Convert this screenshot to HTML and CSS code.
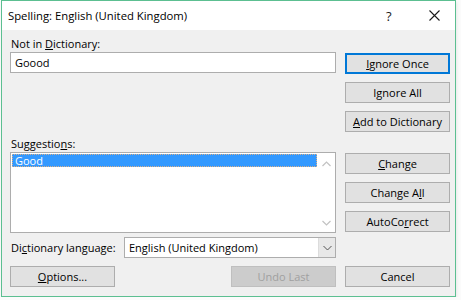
FILE: index.html
```html
<!DOCTYPE html>
<html>
<head>
<meta charset="utf-8">
<link rel="stylesheet" href="styles.css">
</head>
<body>
<div class="window">
  <div class="titlebar">
    <span class="title">Spelling: English (United Kingdom)</span>
    <span class="help">?</span>
    <span class="close"><svg width="11" height="11" viewBox="0 0 11 11"><path d="M0.5 0.5 L10.5 10.5 M10.5 0.5 L0.5 10.5" stroke="#1a1a1a" stroke-width="1.1" fill="none"/></svg></span>
  </div>
  <div class="body">
    <div class="left">
      <div class="label first">Not in <u>D</u>ictionary:</div>
      <div class="input">Goood</div>
      <div class="label sugg">Suggestio<u>n</u>s:</div>
      <div class="list">
        <div class="items"><div class="item sel">Good</div></div>
        <div class="scroll">
          <svg width="9" height="6" viewBox="0 0 9 6"><path d="M0.5 5 L4.5 1 L8.5 5" stroke="#c2c2c2" stroke-width="1.2" fill="none"/></svg>
          <svg width="9" height="6" viewBox="0 0 9 6"><path d="M0.5 1 L4.5 5 L8.5 1" stroke="#c2c2c2" stroke-width="1.2" fill="none"/></svg>
        </div>
      </div>
      <div class="langrow">
        <span class="langlabel">Di<u>c</u>tionary language:</span>
        <div class="combo">
          <span class="comboval">English (United Kingdom)</span>
          <span class="arrow"><svg width="9" height="6" viewBox="0 0 9 6"><path d="M0.5 1 L4.5 5 L8.5 1" stroke="#555" stroke-width="1" fill="none"/></svg></span>
        </div>
      </div>
      <div class="bottom">
        <button class="btn"><u>O</u>ptions...</button>
        <button class="btn" disabled>Undo Last</button>
      </div>
    </div>
    <div class="right">
      <button class="btn default"><u>I</u>gnore Once</button>
      <button class="btn">I<u>g</u>nore All</button>
      <button class="btn"><u>A</u>dd to Dictionary</button>
      <button class="btn gap1"><u>C</u>hange</button>
      <button class="btn">Change A<u>l</u>l</button>
      <button class="btn">AutoCo<u>r</u>rect</button>
      <button class="btn gap2">Cancel</button>
    </div>
  </div>
</div>
</body>
</html>
```
FILE: styles.css
```css
* { box-sizing: border-box; }
html, body { margin: 0; padding: 0; background: #fbfbfb; }
body { font-family: "Open Sans", "Noto Sans", sans-serif; font-size: 11px; color: #000; }

.window {
  margin-left: 1px;
  width: 455px;
  height: 297px;
  border: 1px solid #5cbf91;
  background: #f0f0f0;
  display: flex;
  flex-direction: column;
  box-shadow: 1px 2px 3px rgba(0,0,0,0.08);
}

.titlebar {
  height: 29px;
  background: #fff;
  display: flex;
  align-items: center;
  padding-left: 6px;
  flex: none;
}
.title { font-size: 11.3px; flex: 1; color: #000; }
.help { font-size: 13px; width: 14px; margin-right: 29px; color: #1a1a1a; }
.close { width: 11px; height: 11px; margin-right: 15px; display: flex; }

.body {
  flex: 1;
  display: flex;
  gap: 9px;
  padding: 0 5px 0 8px;
}

.left { width: 326px; display: flex; flex-direction: column; }
.label { height: 16px; line-height: 16px; padding-left: 1px; }
.label.first { margin-top: 6px; }
.label.sugg { margin-top: 63px; }

.input {
  height: 21px;
  border: 1px solid #adadad;
  background: #fff;
  padding-left: 4px;
  line-height: 19px;
}

.list {
  height: 81px;
  border: 1px solid #adadad;
  background: #fff;
  display: flex;
}
.items { flex: 1; padding: 1px 1px; }
.item { height: 13px; line-height: 13px; padding-left: 2px; }
.item.sel { background: #3399ff; color: #fff; border: 1px dotted #d9b08a; line-height: 11px; }
.scroll {
  width: 17px;
  display: flex;
  flex-direction: column;
  justify-content: space-between;
  align-items: center;
  padding: 8px 0 6px;
}
.scroll svg { display: block; }

.langrow {
  margin-top: 4px;
  display: flex;
  align-items: center;
  height: 21px;
}
.langlabel { width: 114px; padding-left: 1px; }
.combo {
  flex: 1;
  height: 21px;
  border: 1px solid #adadad;
  background: #fff;
  display: flex;
}
.comboval { flex: 1; padding-left: 4px; line-height: 19px; }
.arrow {
  width: 17px;
  border-left: 1px solid #dcdcdc;
  background: #e8e8e8;
  display: flex;
  align-items: center;
  justify-content: center;
}
.arrow svg { display: block; }

.bottom {
  margin-top: 8px;
  display: flex;
  justify-content: space-between;
}

.btn {
  font: inherit;
  color: #000;
  width: 105px;
  height: 21px;
  border: 1px solid #adadad;
  background: #e1e1e1;
  padding: 0;
  margin: 0;
  line-height: 19px;
  text-align: center;
}
.btn:disabled { color: #a0a0a0; background: #cccccc; border-color: #bfbfbf; }
.btn.default { border: 2px solid #0078d7; line-height: 17px; }

.right {
  width: 105px;
  display: flex;
  flex-direction: column;
  gap: 8px;
  padding-top: 23px;
}
.right .gap1 { margin-top: 13px; }
.right .gap2 { margin-top: 26px; }

u { text-decoration: underline; text-underline-offset: 1px; }
```
